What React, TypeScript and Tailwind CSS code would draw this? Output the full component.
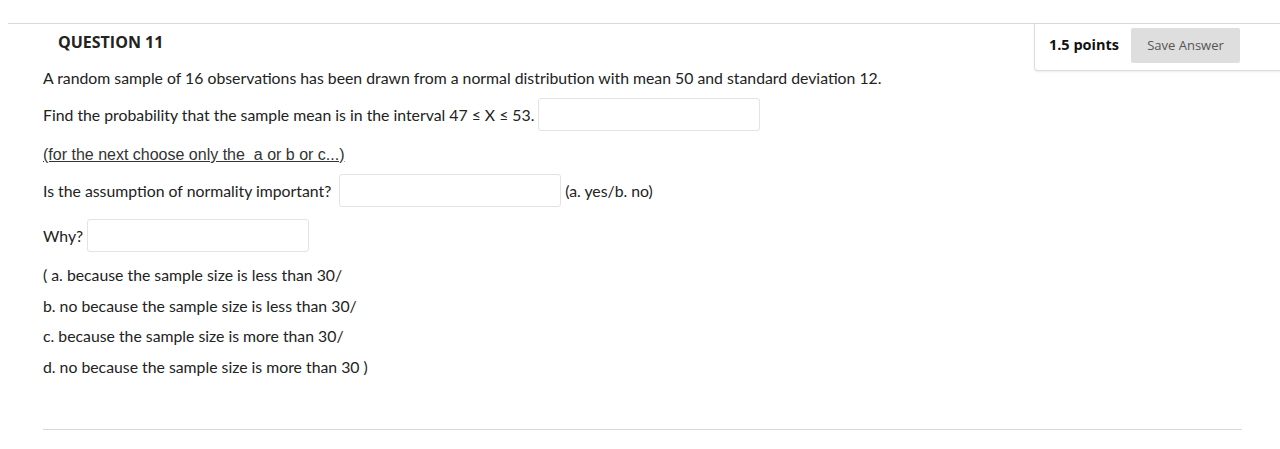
import React from "react";

const body = "font-['Lato','Open_Sans',sans-serif] text-[15.8px] text-[#222]";
const inputClasses =
  "h-[33px] w-[222px] rounded-[3px] border border-[#e3e3e3] bg-white px-2 outline-none";

export default function App() {
  return (
    <div className="h-[449px] w-[1280px] bg-white">
      <div className="pt-[23px] pl-[8px]">
        <div className="flex border-t border-[#d9d9d9]">
          <div className="flex-1 pl-[50px] pt-[6px]">
            <h2 className="font-['Open_Sans',sans-serif] text-[16px] font-bold text-[#222]">QUESTION 11</h2>
          </div>
          <div className="flex h-[47px] items-start gap-[12px] rounded-bl-[4px] border-b border-l border-[#dcdcdc] pl-[14px] pr-[40px] pt-[4px] shadow-[0_1px_2px_rgba(0,0,0,0.08)]">
            <span className="mt-[6px] font-['Open_Sans',sans-serif] text-[14.5px] font-bold text-[#111]">1.5 points</span>
            <button className="h-[35px] w-[109px] rounded-[2px] bg-[#dedede] font-['Open_Sans',sans-serif] text-[13px] text-[#555]">
              Save Answer
            </button>
          </div>
        </div>
      </div>

      <div className={`${body} pl-[43px]`}>
        <p className="mt-[-1px] leading-[16px]">
          A random sample of 16 observations has been drawn from a normal distribution with mean 50 and standard deviation 12.
        </p>
        <div className="mt-[12px] flex items-center gap-[4px]">
          <span>Find the probability that the sample mean is in the interval 47 ≤ X ≤ 53.</span>
          <input className={inputClasses} />
        </div>
        <p className="mt-[12px] font-['Liberation_Sans',sans-serif] text-[16px] text-[#333] underline">
          (for the next choose only the&nbsp; a or b or c...)
        </p>
        <div className="mt-[7px] flex items-center gap-[4px]">
          <span>Is the assumption of normality important?</span>
          <input className={`${inputClasses} ml-[4px]`} />
          <span>(a. yes/b. no)</span>
        </div>
        <div className="mt-[12px] flex items-center gap-[4px]">
          <span>Why?</span>
          <input className={inputClasses} />
        </div>
        <div className="mt-[13px] flex flex-col gap-[10.5px] leading-[20px]">
          <p>( a. because the sample size is less than 30/</p>
          <p>b. no because the sample size is less than 30/</p>
          <p>c. because the sample size is more than 30/</p>
          <p>d. no because the sample size is more than 30 )</p>
        </div>
      </div>

      <div className="mx-[43px] mt-[52px] w-[1199px] border-t border-[#d9d9d9]" />
    </div>
  );
}
